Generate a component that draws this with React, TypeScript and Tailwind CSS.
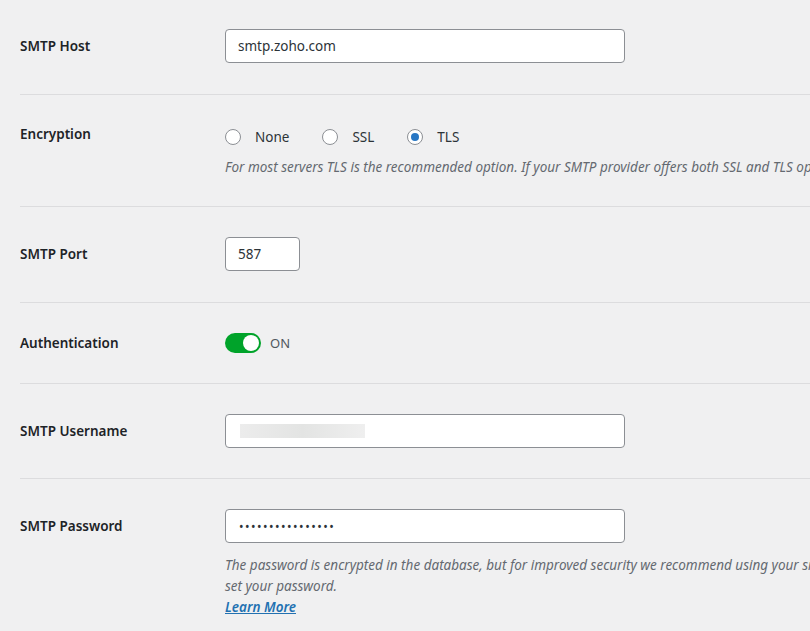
import { type ReactNode } from 'react';

function Row({
  label,
  labelClass = 'h-[34px]',
  padClass = 'pt-[30px] pb-[31px]',
  children,
}: {
  label: string;
  labelClass?: string;
  padClass?: string;
  children: ReactNode;
}) {
  return (
    <div className={`flex border-b border-[#dcdcde] ${padClass}`}>
      <div className={`flex w-[205px] shrink-0 items-center font-semibold ${labelClass}`}>
        {label}
      </div>
      <div className="min-w-0 flex-1">{children}</div>
    </div>
  );
}

function TextBox({ className = 'w-[400px]', children }: { className?: string; children: ReactNode }) {
  return (
    <div
      className={`flex h-[34px] items-center rounded-[4px] border border-[#8c8f94] bg-white px-[12px] text-[#2c3338] ${className}`}
    >
      {children}
    </div>
  );
}

function Radio({ label, checked = false }: { label: string; checked?: boolean }) {
  return (
    <label className="flex items-center gap-[14px]">
      <span className="flex h-[16px] w-[16px] items-center justify-center rounded-full border border-[#8c8f94] bg-white">
        {checked && <span className="h-[8px] w-[8px] rounded-full bg-[#2877c4]" />}
      </span>
      <span className="text-[#2c3338]">{label}</span>
    </label>
  );
}

export default function App() {
  return (
    <div className="min-h-screen overflow-hidden bg-[#f0f0f1] font-['Noto_Sans',sans-serif] text-[13.5px] leading-[21px] text-[#1d2327]">
      <div className="w-[1240px] pl-[20px]">
        <Row label="SMTP Host" padClass="pt-[29px] pb-[31px]">
          <TextBox>smtp.zoho.com</TextBox>
        </Row>

        <Row label="Encryption" labelClass="h-[18px]" padClass="pt-[30px] pb-[29px]">
          <div className="flex h-[24px] items-center gap-[33px]">
            <Radio label="None" />
            <Radio label="SSL" />
            <Radio label="TLS" checked />
          </div>
          <p className="mt-[8px] whitespace-nowrap text-[13.5px] leading-[20px] text-[#646970] italic">
            For most servers TLS is the recommended option. If your SMTP provider offers both SSL and
            TLS options, we recommend using TLS.
          </p>
        </Row>

        <Row label="SMTP Port">
          <TextBox className="w-[75px]">587</TextBox>
        </Row>

        <Row label="Authentication" labelClass="h-[20px]" padClass="pt-[30px] pb-[30px]">
          <div className="flex h-[20px] items-center gap-[9px]">
            <span className="flex h-[20px] w-[36px] items-center justify-end rounded-full bg-[#00a32a] px-[2px]">
              <span className="h-[16px] w-[16px] rounded-full bg-white" />
            </span>
            <span className="text-[13px] text-[#50575e]">ON</span>
          </div>
        </Row>

        <Row label="SMTP Username" padClass="pt-[30px] pb-[30px]">
          <TextBox>
            <span className="ml-[2px] h-[14px] w-[125px] bg-gradient-to-r from-[#ececec] via-[#e3e4e3] to-[#efefef] blur-[0.5px]" />
          </TextBox>
        </Row>

        <Row label="SMTP Password">
          <TextBox>
            <span className="ml-[1px] text-[12px] tracking-[1.5px] text-[#2c3338]">
              ••••••••••••••••
            </span>
          </TextBox>
          <p className="mt-[12px] text-[13.5px] leading-[21px] text-[#646970] italic">
            The password is encrypted in the database, but for improved security we recommend using
            your site's WordPress configuration file to
            <br />
            set your password.
          </p>
          <a
            href="#"
            className="text-[13.5px] leading-[21px] font-semibold text-[#2271b1] italic underline"
          >
            Learn More
          </a>
        </Row>
      </div>
    </div>
  );
}
